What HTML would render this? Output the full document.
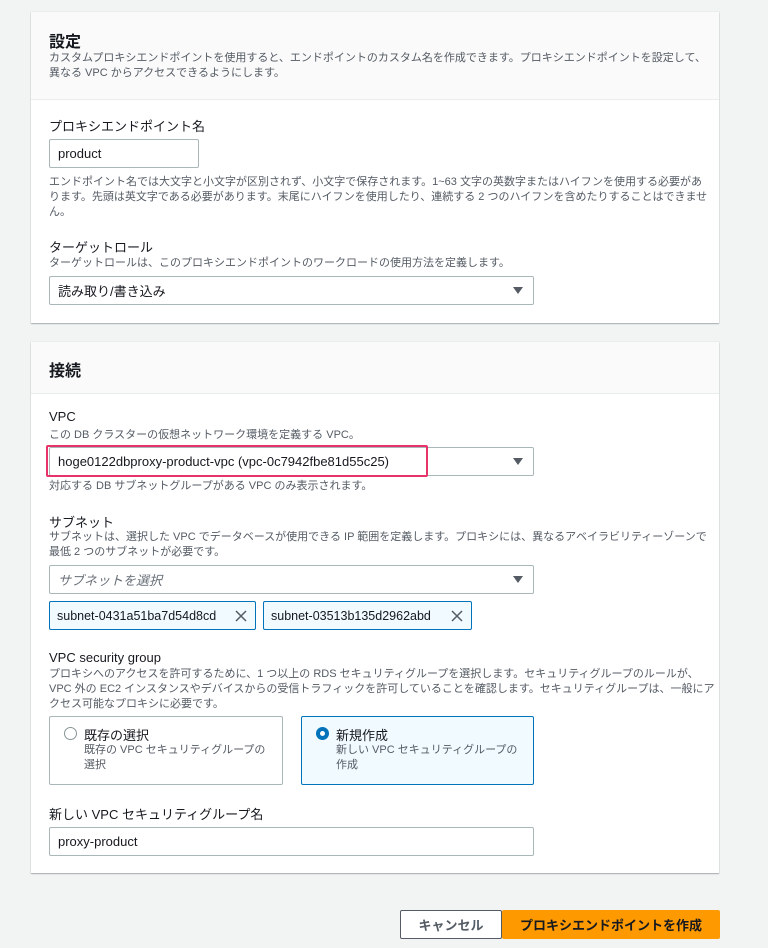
<!DOCTYPE html>
<html><head><meta charset="utf-8"><style>
*{box-sizing:border-box;margin:0;padding:0}
body{width:768px;height:948px;background:#f2f3f3;font-family:"Liberation Sans","Noto Sans CJK JP",sans-serif;color:#16191f;position:relative;overflow:hidden}
.a{position:absolute;white-space:nowrap}
.panel{position:absolute;left:31px;width:688px;background:#fff;box-shadow:0 1px 1px rgba(0,22,40,.3),0 0 0 1px #eaeded}
.hdr{position:absolute;left:0;top:0;width:100%;background:#fafafa;border-bottom:1px solid #eaeded}
.t{font-size:16px;font-weight:bold}
.d{font-size:11px;color:#545b64;line-height:15px}
.l{font-size:13px;color:#16191f}
.box{position:absolute;border:1px solid #aab7b8;border-radius:2px;background:#fff;font-size:13px;padding-left:8px;display:flex;align-items:center}
.arr{position:absolute;right:10px;top:10px;width:0;height:0;border-left:5px solid transparent;border-right:5px solid transparent;border-top:7px solid #545b64}
.chip{position:absolute;top:601px;height:29px;background:#f1faff;border:1px solid #0073bb;border-radius:2px;font-size:12.5px;padding-left:7px;display:flex;align-items:center}
.x{position:absolute;right:7px;top:7px}
</style></head><body>
<div class="panel" style="top:12px;height:311px">
 <div class="hdr" style="height:88px"></div>
</div>
<div class="a t" style="left:49px;top:28px">設定</div>
<div class="a d" style="left:49px;top:51px">カスタムプロキシエンドポイントを使用すると、エンドポイントのカスタム名を作成できます。プロキシエンドポイントを設定して、<br>異なる VPC からアクセスできるようにします。</div>
<div class="a l" style="left:49px;top:116px">プロキシエンドポイント名</div>
<div class="box" style="left:49px;top:139px;width:150px;height:29px">product</div>
<div class="a d" style="left:49px;top:175px">エンドポイント名では大文字と小文字が区別されず、小文字で保存されます。1~63 文字の英数字またはハイフンを使用する必要があ<br>ります。先頭は英文字である必要があります。末尾にハイフンを使用したり、連続する 2 つのハイフンを含めたりすることはできませ<br>ん。</div>
<div class="a l" style="left:49px;top:237px">ターゲットロール</div>
<div class="a d" style="left:49px;top:256px">ターゲットロールは、このプロキシエンドポイントのワークロードの使用方法を定義します。</div>
<div class="box" style="left:49px;top:276px;width:485px;height:29px">読み取り/書き込み<span class="arr"></span></div>

<div class="panel" style="top:342px;height:531px">
 <div class="hdr" style="height:52px"></div>
</div>
<div class="a t" style="left:49px;top:357px">接続</div>
<div class="a l" style="left:49px;top:409px">VPC</div>
<div class="a d" style="left:49px;top:428px">この DB クラスターの仮想ネットワーク環境を定義する VPC。</div>
<div class="box" style="left:49px;top:447px;width:485px;height:29px">hoge0122dbproxy-product-vpc (vpc-0c7942fbe81d55c25)<span class="arr"></span></div>
<div class="a" style="left:46px;top:445px;width:382px;height:32px;border:2px solid #e8336a;border-radius:2px"></div>
<div class="a d" style="left:49px;top:479px">対応する DB サブネットグループがある VPC のみ表示されます。</div>
<div class="a l" style="left:49px;top:512px">サブネット</div>
<div class="a d" style="left:49px;top:530px">サブネットは、選択した VPC でデータベースが使用できる IP 範囲を定義します。プロキシには、異なるアベイラビリティーゾーンで<br>最低 2 つのサブネットが必要です。</div>
<div class="box" style="left:49px;top:565px;width:485px;height:29px;color:#687078;font-style:italic">サブネットを選択<span class="arr"></span></div>
<div class="chip" style="left:49px;width:207px">subnet-0431a51ba7d54d8cd<svg class="x" width="14" height="14" viewBox="0 0 14 14"><path d="M2 2L12 12M12 2L2 12" stroke="#545b64" stroke-width="1.5"/></svg></div>
<div class="chip" style="left:263px;width:209px">subnet-03513b135d2962abd<svg class="x" width="14" height="14" viewBox="0 0 14 14"><path d="M2 2L12 12M12 2L2 12" stroke="#545b64" stroke-width="1.5"/></svg></div>
<div class="a l" style="left:49px;top:650px">VPC security group</div>
<div class="a d" style="left:49px;top:667px">プロキシへのアクセスを許可するために、1 つ以上の RDS セキュリティグループを選択します。セキュリティグループのルールが、<br>VPC 外の EC2 インスタンスやデバイスからの受信トラフィックを許可していることを確認します。セキュリティグループは、一般にア<br>クセス可能なプロキシに必要です。</div>
<div class="a" style="left:49px;top:716px;width:234px;height:69px;border:1px solid #aab7b8;border-radius:2px"></div>
<div class="a" style="left:64px;top:727px;width:13px;height:13px;border:1px solid #879596;border-radius:50%"></div>
<div class="a l" style="left:84px;top:725px">既存の選択</div>
<div class="a d" style="left:84px;top:743px">既存の VPC セキュリティグループの<br>選択</div>
<div class="a" style="left:301px;top:716px;width:233px;height:69px;border:1px solid #0073bb;border-radius:2px;background:#f1faff"></div>
<div class="a" style="left:316px;top:727px;width:13px;height:13px;border:4px solid #0073bb;border-radius:50%;background:#fff"></div>
<div class="a l" style="left:336px;top:725px">新規作成</div>
<div class="a d" style="left:336px;top:743px">新しい VPC セキュリティグループの<br>作成</div>
<div class="a l" style="left:49px;top:804px">新しい VPC セキュリティグループ名</div>
<div class="box" style="left:49px;top:827px;width:485px;height:29px">proxy-product</div>

<div class="a" style="left:400px;top:910px;width:102px;height:29px;border:1px solid #545b64;border-radius:2px;background:#fff;font-size:13px;font-weight:bold;color:#545b64;display:flex;align-items:center;justify-content:center">キャンセル</div>
<div class="a" style="left:502px;top:910px;width:218px;height:29px;border-radius:2px;background:#f90;font-size:13px;font-weight:bold;color:#16191f;display:flex;align-items:center;justify-content:center">プロキシエンドポイントを作成</div>
</body></html>
